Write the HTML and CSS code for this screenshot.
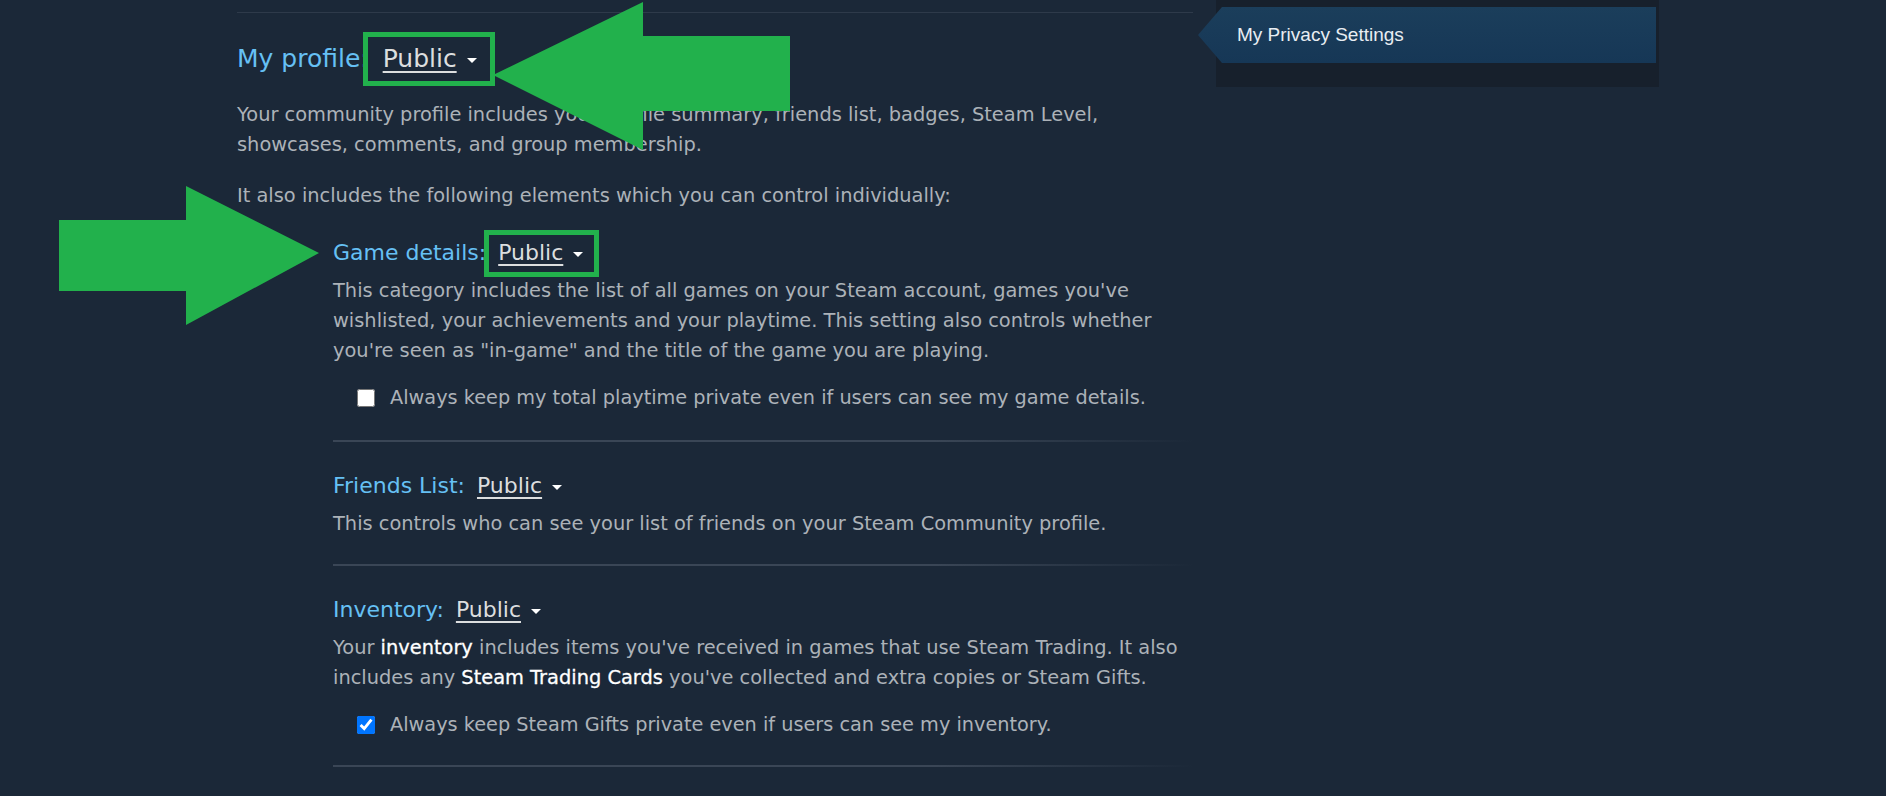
FILE: index.html
```html
<!DOCTYPE html>
<html lang="en">
<head>
<meta charset="utf-8">
<title>Privacy Settings</title>
<link rel="stylesheet" href="styles.css">
</head>
<body>
<div class="page">
  <main class="settings">
    <h2 class="title">My profile: <span class="dd hl hl-profile">Public</span></h2>
    <p class="desc">Your community profile includes your profile summary, friends list, badges, Steam Level,<br>showcases, comments, and group membership.</p>
    <p class="desc desc-gap">It also includes the following elements which you can control individually:</p>

    <div class="sub">
      <section class="sub-item">
        <h3 class="sub-title">Game details: <span class="dd hl hl-game">Public</span></h3>
        <p class="desc">This category includes the list of all games on your Steam account, games you've<br>wishlisted, your achievements and your playtime. This setting also controls whether<br>you're seen as "in-game" and the title of the game you are playing.</p>
        <label class="check"><input type="checkbox"><span>Always keep my total playtime private even if users can see my game details.</span></label>
      </section>
      <section class="sub-item">
        <h3 class="sub-title">Friends List: <span class="dd">Public</span></h3>
        <p class="desc">This controls who can see your list of friends on your Steam Community profile.</p>
      </section>
      <section class="sub-item">
        <h3 class="sub-title">Inventory: <span class="dd">Public</span></h3>
        <p class="desc">Your <b>inventory</b> includes items you've received in games that use Steam Trading. It also<br>includes any <b>Steam Trading Cards</b> you've collected and extra copies or Steam Gifts.</p>
        <label class="check"><input type="checkbox" checked><span>Always keep Steam Gifts private even if users can see my inventory.</span></label>
      </section>
    </div>
  </main>

  <aside class="sidebar">
    <div class="tab">My Privacy Settings</div>
  </aside>

  <svg class="arrow arrow-left" width="1886" height="796" viewBox="0 0 1886 796" aria-hidden="true">
    <polygon points="493,75 643,2 643,36 790,36 790,111 643,111 643,150" fill="#22b14c"/>
  </svg>
  <svg class="arrow arrow-right" width="1886" height="796" viewBox="0 0 1886 796" aria-hidden="true">
    <polygon points="319,253 186,186 186,220 59,220 59,291 186,291 186,325" fill="#22b14c"/>
  </svg>
</div>
</body>
</html>
```

FILE: styles.css
```css
* { box-sizing: border-box; }

html, body {
  margin: 0;
  padding: 0;
}

body {
  background: #1b2838;
  color: #acb2b8;
  font-family: "DejaVu Sans", "Liberation Sans", sans-serif;
}

.page {
  position: relative;
  display: flex;
  align-items: flex-start;
  width: 1886px;
  height: 796px;
  overflow: hidden;
}

.settings {
  margin-left: 237px;
  margin-top: 12px;
  width: 956px;
  flex: none;
  border-top: 1px solid #2e3a4a;
}

.title {
  margin: 0;
  padding-top: 30px;
  font-size: 25px;
  line-height: 32px;
  font-weight: normal;
  color: #66c0f4;
}

.sub-title {
  margin: 0;
  font-size: 22px;
  line-height: 30px;
  font-weight: normal;
  color: #66c0f4;
}

.dd {
  position: relative;
  margin-left: 5px;
  color: #dcdedf;
  text-decoration: underline;
  text-decoration-thickness: 2px;
  text-underline-offset: 4px;
}

.title .dd {
  margin-left: 6px;
}

.dd::after {
  content: "";
  display: inline-block;
  margin-left: 10px;
  vertical-align: middle;
  border-left: 5px solid transparent;
  border-right: 5px solid transparent;
  border-top: 5px solid #ffffff;
}

.hl::before {
  content: "";
  position: absolute;
  border: 5px solid #22b14c;
  pointer-events: none;
}

.hl-profile::before {
  left: -20px;
  right: -18px;
  top: -12px;
  bottom: -13px;
}

.hl-game::before {
  left: -14px;
  right: -16px;
  top: -10px;
  bottom: -12px;
}

.desc {
  margin: 25px 0 0;
  font-size: 19.4px;
  line-height: 30px;
}

.desc-gap {
  margin-top: 21px;
}

.desc b {
  font-weight: normal;
  color: #ffffff;
  -webkit-text-stroke: 0.3px #ffffff;
}

.sub {
  margin-left: 96px;
  margin-top: 27px;
}

.sub-item {
  padding: 29px 0 25px;
  border-bottom: 2px solid transparent;
  border-image: linear-gradient(to right, #3a4656 0%, #3a4656 70%, rgba(58, 70, 86, 0) 100%) 1;
}

.sub-item:first-child {
  padding-top: 0;
  padding-bottom: 27px;
}

.sub-item:last-child {
  padding-bottom: 25px;
}

.sub-item .desc {
  margin-top: 8px;
}

.check {
  display: flex;
  align-items: center;
  margin-top: 17px;
  margin-left: 24px;
  font-size: 19.3px;
  line-height: 30px;
}

.check input {
  width: 18px;
  height: 18px;
  margin: 0 15px 0 0;
  flex: none;
}

.sidebar {
  flex: none;
  margin-left: 23px;
  width: 443px;
  height: 87px;
  padding-top: 7px;
  background: #17202c;
}

.tab {
  margin-left: -18px;
  width: 458px;
  height: 56px;
  padding-left: 39px;
  display: flex;
  align-items: center;
  background: linear-gradient(to bottom, #1b3e5b 0%, #163756 100%);
  clip-path: polygon(0 50%, 24px 0, 100% 0, 100% 100%, 24px 100%);
  color: #e8edf2;
  font-family: "Liberation Sans", Arial, sans-serif;
  font-size: 19px;
}

.arrow {
  position: absolute;
  left: 0;
  top: 0;
  pointer-events: none;
}
```
